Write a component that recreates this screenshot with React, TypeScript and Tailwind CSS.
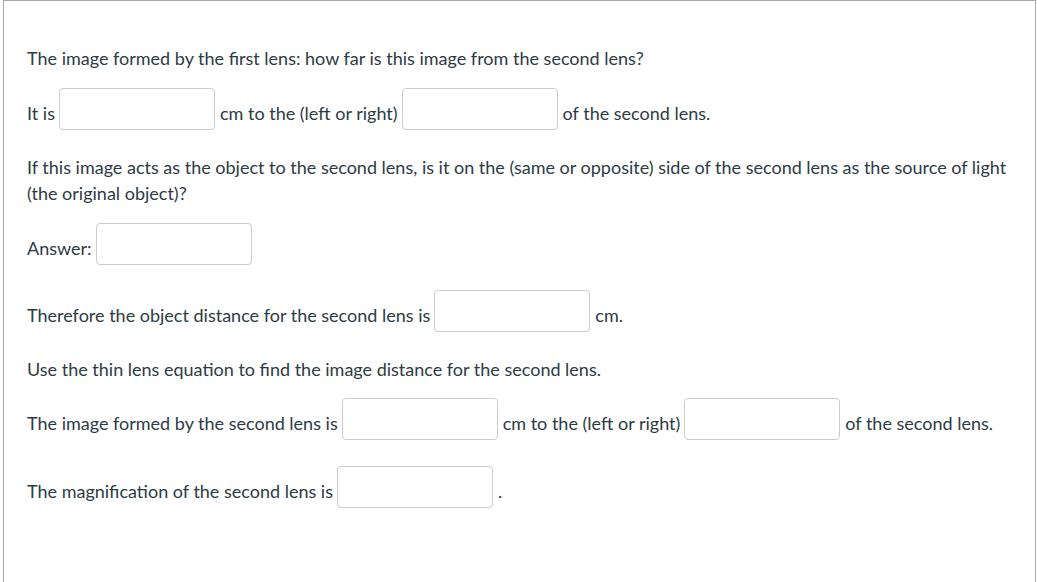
import React from "react";

const Box = () => (
  <span className="inline-block w-[156px] h-[42px] border border-[#c7cdd1] rounded-[4px] bg-white shrink-0" />
);

export default function App() {
  return (
    <div className="w-[1037px] h-[582px] bg-white overflow-hidden">
      <div
        className="ml-[3px] w-[1033px] h-[600px] border-t border-l border-r border-[#a8a8a8] pl-[23px] pt-[44px] text-[18px] leading-[26px] text-[#2d3b45]"
        style={{ fontFamily: "Lato, 'Noto Sans', sans-serif" }}
      >
        <p>The image formed by the first lens: how far is this image from the second lens?</p>
        <div className="mt-[17px] flex items-center gap-[4px]">
          <span className="mt-[8px]">It is</span>
          <Box />
          <span className="ml-[1px] mt-[8px]">cm to the (left or right)</span>
          <Box />
          <span className="ml-[1px] mt-[8px]">of the second lens.</span>
        </div>
        <p className="mt-[24px] pr-[20px]">
          If this image acts as the object to the second lens, is it on the (same or opposite) side of the second lens as the source of light (the original object)?
        </p>
        <div className="mt-[17px] flex items-center gap-[4px]">
          <span className="mt-[8px]">Answer:</span>
          <Box />
        </div>
        <div className="mt-[25px] flex items-center gap-[4px]">
          <span className="mt-[8px]">Therefore the object distance for the second lens is</span>
          <Box />
          <span className="ml-[1px] mt-[8px]">cm.</span>
        </div>
        <p className="mt-[24px]">Use the thin lens equation to find the image distance for the second lens.</p>
        <div className="mt-[16px] flex items-center gap-[4px]">
          <span className="mt-[8px]">The image formed by the second lens is</span>
          <Box />
          <span className="ml-[1px] mt-[8px]">cm to the (left or right)</span>
          <Box />
          <span className="ml-[1px] mt-[8px]">of the second lens.</span>
        </div>
        <div className="mt-[26px] flex items-center gap-[4px]">
          <span className="mt-[8px]">The magnification of the second lens is</span>
          <Box />
          <span className="ml-[1px] mt-[8px]">.</span>
        </div>
      </div>
    </div>
  );
}
